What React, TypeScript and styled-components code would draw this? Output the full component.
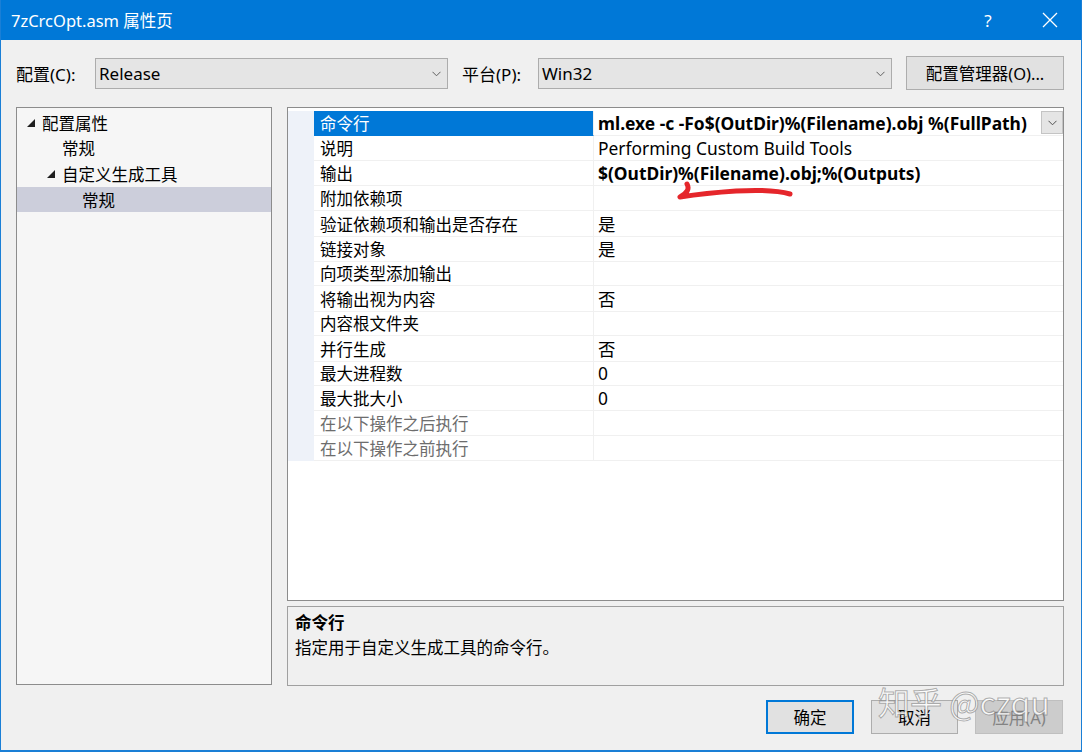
import React from "react";
import styled, { createGlobalStyle, css } from "styled-components";

const GlobalStyle = createGlobalStyle`
  html, body {
    margin: 0;
    padding: 0;
    background: #f0f0f0;
  }
  body {
    font-family: "Noto Sans", "Noto Sans CJK SC", sans-serif;
    color: #000;
  }
`;

const UI_FONT = `"Noto Sans", "Noto Sans CJK SC", sans-serif`;
const CJK_FONT = `"Noto Sans CJK SC", "Noto Sans", sans-serif`;

const Window = styled.div`
  position: relative;
  display: flex;
  flex-direction: column;
  width: 1082px;
  height: 752px;
  box-sizing: border-box;
  background: #f0f0f0;
  border-left: 1px solid #1a7fd6;
  border-right: 1px solid #1a7fd6;
  border-bottom: 2px solid #1a7fd6;
  overflow: hidden;
`;

const TitleBar = styled.div`
  display: flex;
  align-items: center;
  height: 40px;
  background: #0078d7;
  color: #fff;
  padding-left: 10px;
  font-family: ${UI_FONT};
  font-size: 16.5px;
`;

const TitleText = styled.div`
  flex: 1;
`;

const TitleButton = styled.div`
  display: flex;
  align-items: center;
  justify-content: center;
  width: 62px;
  height: 40px;
  color: #fff;
  font-size: 17px;
`;

const Body = styled.div`
  flex: 1;
  display: flex;
  flex-direction: column;
  padding: 16px 17px 16px 15px;
`;

const ConfigRow = styled.div`
  display: flex;
  align-items: center;
  height: 34px;
  font-family: ${UI_FONT};
  font-size: 17px;
`;

const Label = styled.span<{ $width: number }>`
  width: ${(p) => p.$width}px;
  white-space: nowrap;
`;

const Combo = styled.div<{ $width: number; $after: number }>`
  display: flex;
  align-items: center;
  justify-content: space-between;
  box-sizing: border-box;
  width: ${(p) => p.$width}px;
  margin-right: ${(p) => p.$after}px;
  height: 31px;
  margin-top: 1px;
  padding: 0 6px 0 3px;
  background: #e5e5e5;
  border: 1px solid #acacac;
`;

const Button = styled.div<{ $primary?: boolean; $disabled?: boolean; $width: number }>`
  display: flex;
  align-items: center;
  justify-content: center;
  box-sizing: border-box;
  width: ${(p) => p.$width}px;
  height: 34px;
  background: #e1e1e1;
  border: 1px solid #adadad;
  font-family: ${UI_FONT};
  font-size: 16.5px;
  color: #000;
  ${(p) =>
    p.$primary &&
    css`
      border: 2px solid #0078d7;
    `}
  ${(p) =>
    p.$disabled &&
    css`
      background: #cccccc;
      border-color: #bfbfbf;
      color: #838383;
    `}
`;

const Main = styled.div`
  display: flex;
  gap: 15px;
  height: 579px;
  margin-top: 17px;
`;

const TreePanel = styled.div`
  box-sizing: border-box;
  width: 256px;
  height: 578px;
  padding-top: 2px;
  background: #f6f6f6;
  border: 1px solid #8c8c8c;
  font-family: ${CJK_FONT};
  font-size: 16.5px;
`;

const TreeItem = styled.div<{ $level: number; $selected?: boolean }>`
  display: flex;
  align-items: center;
  height: 25.6px;
  padding-left: ${(p) => 25 + p.$level * 20}px;
  background: ${(p) => (p.$selected ? "#cccedb" : "transparent")};
`;

const Expander = styled.svg`
  width: 8px;
  height: 8px;
  margin-left: -15px;
  margin-right: 7px;
`;

const RightColumn = styled.div`
  flex: 1;
  display: flex;
  flex-direction: column;
  gap: 5px;
`;

const GridPanel = styled.div`
  box-sizing: border-box;
  height: 494px;
  padding-top: 3px;
  background: #fff;
  border: 1px solid #8c8c8c;
`;

const Row = styled.div`
  display: grid;
  grid-template-columns: 26px 280px 1fr;
  height: 25px;
`;

const Gutter = styled.div`
  background: #eef2f9;
`;

const NameCell = styled.div<{ $selected?: boolean; $disabled?: boolean }>`
  display: flex;
  align-items: center;
  box-sizing: border-box;
  padding-left: 6px;
  border-bottom: 1px solid #f0f0f0;
  border-right: 1px solid #f0f0f0;
  font-family: ${CJK_FONT};
  font-size: 16.5px;
  color: ${(p) => (p.$disabled ? "#6d6d6d" : "#000")};
  ${(p) =>
    p.$selected &&
    css`
      background: #0078d7;
      color: #fff;
      border-bottom-color: #0078d7;
    `}
`;

const ValueCell = styled.div<{ $bold?: boolean }>`
  display: flex;
  align-items: center;
  justify-content: space-between;
  box-sizing: border-box;
  padding-left: 4px;
  border-bottom: 1px solid #f0f0f0;
  font-family: ${UI_FONT};
  font-size: 17.4px;
  font-weight: ${(p) => (p.$bold ? 700 : 400)};
  white-space: nowrap;
`;

const CellDropButton = styled.div`
  display: flex;
  align-items: center;
  justify-content: center;
  align-self: flex-start;
  box-sizing: border-box;
  width: 22px;
  height: 23px;
  background: #e5e5e5;
  border: 1px solid #c4c4c4;
`;

const DescPanel = styled.div`
  box-sizing: border-box;
  height: 80px;
  padding: 3px 7px;
  background: #f0f0f0;
  border: 1px solid #a0a0a0;
  font-family: ${CJK_FONT};
  font-size: 16.5px;
  line-height: 25px;
`;

const DescTitle = styled.div`
  font-weight: 700;
`;

const Footer = styled.div`
  display: flex;
  justify-content: flex-end;
  gap: 17px;
  margin-top: 14px;
  padding-right: 1px;
`;

const Annotation = styled.svg`
  position: absolute;
  left: 0;
  top: 0;
  pointer-events: none;
`;

const Watermark = styled.div`
  position: absolute;
  left: 877px;
  top: 678px;
  font-family: ${CJK_FONT};
  font-size: 32px;
  color: rgba(255, 255, 255, 0.85);
  -webkit-text-stroke: 1px rgba(110, 110, 110, 0.55);
  white-space: nowrap;
  pointer-events: none;
`;

const Chevron = ({ color = "#606060" }: { color?: string }) => (
  <svg width="9" height="6" viewBox="0 0 9 6">
    <polyline points="0.5,0.8 4.5,4.8 8.5,0.8" fill="none" stroke={color} strokeWidth="1" />
  </svg>
);

const ExpandedIcon = () => (
  <Expander viewBox="0 0 8 8">
    <polygon points="8,0 8,8 0,8" fill="#1e1e1e" />
  </Expander>
);

type Prop = {
  name: string;
  value?: string;
  bold?: boolean;
  selected?: boolean;
  disabled?: boolean;
};

const props: Prop[] = [
  { name: "命令行", value: "ml.exe -c -Fo$(OutDir)%(Filename).obj %(FullPath)", bold: true, selected: true },
  { name: "说明", value: "Performing Custom Build Tools" },
  { name: "输出", value: "$(OutDir)%(Filename).obj;%(Outputs)", bold: true },
  { name: "附加依赖项" },
  { name: "验证依赖项和输出是否存在", value: "是" },
  { name: "链接对象", value: "是" },
  { name: "向项类型添加输出" },
  { name: "将输出视为内容", value: "否" },
  { name: "内容根文件夹" },
  { name: "并行生成", value: "否" },
  { name: "最大进程数", value: "0" },
  { name: "最大批大小", value: "0" },
  { name: "在以下操作之后执行", disabled: true },
  { name: "在以下操作之前执行", disabled: true },
];

const App = () => {
  return (
    <Window>
      <GlobalStyle />
      <TitleBar>
        <TitleText>7zCrcOpt.asm 属性页</TitleText>
        <TitleButton>?</TitleButton>
        <TitleButton>
          <svg width="16" height="16" viewBox="0 0 16 16">
            <path d="M1 1 L15 15 M15 1 L1 15" stroke="#fff" strokeWidth="1.3" />
          </svg>
        </TitleButton>
      </TitleBar>
      <Body>
        <ConfigRow>
          <Label $width={79}>配置(C):</Label>
          <Combo $width={353} $after={14}>
            <span>Release</span>
            <Chevron />
          </Combo>
          <Label $width={76}>平台(P):</Label>
          <Combo $width={354} $after={0}>
            <span>Win32</span>
            <Chevron />
          </Combo>
          <span style={{ flex: 1 }} />
          <Button $width={158}>配置管理器(O)...</Button>
        </ConfigRow>
        <Main>
          <TreePanel>
            <TreeItem $level={0}>
              <ExpandedIcon />
              配置属性
            </TreeItem>
            <TreeItem $level={1}>常规</TreeItem>
            <TreeItem $level={1}>
              <ExpandedIcon />
              自定义生成工具
            </TreeItem>
            <TreeItem $level={2} $selected>
              常规
            </TreeItem>
          </TreePanel>
          <RightColumn>
            <GridPanel>
              {props.map((p) => (
                <Row key={p.name}>
                  <Gutter />
                  <NameCell $selected={p.selected} $disabled={p.disabled}>
                    {p.name}
                  </NameCell>
                  <ValueCell $bold={p.bold}>
                    <span>{p.value}</span>
                    {p.selected && (
                      <CellDropButton>
                        <Chevron color="#505050" />
                      </CellDropButton>
                    )}
                  </ValueCell>
                </Row>
              ))}
            </GridPanel>
            <DescPanel>
              <DescTitle>命令行</DescTitle>
              <div>指定用于自定义生成工具的命令行。</div>
            </DescPanel>
          </RightColumn>
        </Main>
        <Footer>
          <Button $width={88} $primary>
            确定
          </Button>
          <Button $width={87}>取消</Button>
          <Button $width={88} $disabled>
            应用(A)
          </Button>
        </Footer>
      </Body>
      <Annotation width="1082" height="752" viewBox="0 0 1082 752">
        <path
          d="M686 184 Q690 191 679 197 Q705 193 735 191 Q772 189 789 194"
          fill="none"
          stroke="#e5262b"
          strokeWidth="5"
          strokeLinecap="round"
          strokeLinejoin="round"
        />
      </Annotation>
      <Watermark>知乎 @czqu</Watermark>
    </Window>
  );
};

export default App;
